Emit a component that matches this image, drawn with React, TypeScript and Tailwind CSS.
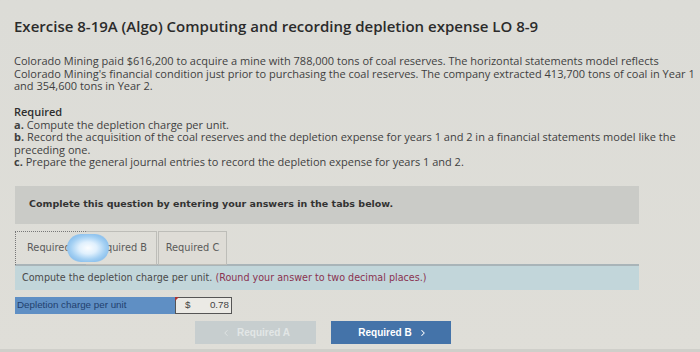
import { ChevronLeft, ChevronRight } from 'lucide-react'

const BODY = { fontFamily: '"Open Sans", "Liberation Sans", sans-serif' }
const VERDANA = { fontFamily: '"DejaVu Sans", Verdana, sans-serif' }
const ARIAL = { fontFamily: '"Liberation Sans", Arial, sans-serif' }

export default function App() {
  return (
    <div
      className="relative h-[352px] w-[700px] overflow-hidden bg-gradient-to-b from-[#dcdcd7] to-[#dfded8] px-[14px] pt-[17px] text-[#3b3b3b]"
      style={BODY}
    >
      <h1 className="text-[15px] leading-[18px] font-semibold whitespace-nowrap text-[#2b2b2b]">
        Exercise 8-19A (Algo) Computing and recording depletion expense LO 8-9
      </h1>

      <div className="mt-[20px] text-[11px] leading-[12.7px] whitespace-nowrap text-[#3f3f3f]">
        <div>Colorado Mining paid $616,200 to acquire a mine with 788,000 tons of coal reserves. The horizontal statements model reflects</div>
        <div>Colorado Mining&apos;s financial condition just prior to purchasing the coal reserves. The company extracted 413,700 tons of coal in Year 1</div>
        <div>and 354,600 tons in Year 2.</div>
      </div>

      <div className="mt-[13px] text-[11px] leading-[12.6px] whitespace-nowrap text-[#3f3f3f]">
        <div className="font-semibold text-[#2e2e2e]">Required</div>
        <div>
          <span className="font-bold">a.</span> Compute the depletion charge per unit.
        </div>
        <div>
          <span className="font-bold">b.</span> Record the acquisition of the coal reserves and the depletion expense for years 1 and 2 in a financial statements model like the
        </div>
        <div>preceding one.</div>
        <div>
          <span className="font-bold">c.</span> Prepare the general journal entries to record the depletion expense for years 1 and 2.
        </div>
      </div>

      <div className="mt-[17px] ml-px w-[624px]">
        <div className="flex h-[38px] items-center bg-[#cacbc7] pb-[2px] pl-[14px]">
          <span className="text-[9.5px] font-bold text-[#333]" style={VERDANA}>
            Complete this question by entering your answers in the tabs below.
          </span>
        </div>

        <div className="relative mt-[7px] flex text-[9.8px] text-[#5a5a5a]" style={VERDANA}>
          <div className="flex w-[142px]">
            <div className="flex h-[34px] w-[71px] items-center border-t border-l border-dotted border-[#777] pl-[11px]">
              Required A
            </div>
            <div className="flex h-[34px] w-[71px] items-center justify-end border border-l-0 border-[#bdbdb8] pr-[9px]">
              Required B
            </div>
          </div>
          <div className="ml-px flex h-[34px] w-[69px] items-center justify-center border border-[#bdbdb8] bg-[#dedcd6]">
            Required C
          </div>
          <div
            className="absolute top-[3px] left-[52px] h-[28px] w-[42px] rounded-full"
            style={{
              background:
                'radial-gradient(ellipse at center, #fbfdff 0%, #e0f0fd 30%, #a4d0f3 58%, #90c3ee 72%, rgba(143,194,238,0.4) 88%, rgba(143,194,238,0) 100%)',
            }}
          />
        </div>

        <div className="-mt-px flex h-[26px] items-center border-t-[2px] border-[#a9b4b8] bg-[#c2d6da] pl-[7px]">
          <span className="text-[9.6px] text-[#4a4a4a]" style={VERDANA}>
            Compute the depletion charge per unit.{' '}
            <span className="text-[#8a3350]">(Round your answer to two decimal places.)</span>
          </span>
        </div>

        <div className="mt-[7px] flex h-[17px]" style={ARIAL}>
          <div className="flex w-[160px] items-center bg-[#5f8fc4] pl-[2px] text-[9.8px] text-[#1f3f6e]">
            Depletion charge per unit
          </div>
          <div className="relative flex w-[57px] items-center justify-between border border-[#555] bg-[#ebeae5] pr-[2px] pl-[9px] text-[9.8px] text-[#444]">
            <span>$</span>
            <span>0.78</span>
            <span className="absolute -top-px -left-px h-0 w-0 border-t-[4px] border-r-[4px] border-t-[#a33] border-r-transparent" />
          </div>
        </div>

        <div className="mt-[7px] ml-[180px] flex gap-[15px] text-[10px] font-bold" style={ARIAL}>
          <div className="flex h-[23px] w-[121px] items-center justify-center gap-[6px] bg-[#c7cecf] text-[#e2e6e6]">
            <ChevronLeft size={10} strokeWidth={2} />
            Required A
          </div>
          <div className="flex h-[23px] w-[120px] items-center justify-center gap-[6px] bg-[#4473a9] pl-[4px] text-white">
            Required B
            <ChevronRight size={10} strokeWidth={2.5} />
          </div>
        </div>
      </div>

      <div className="absolute right-0 bottom-0 left-0 h-[3px] bg-[#cfcfca]" />
    </div>
  )
}
